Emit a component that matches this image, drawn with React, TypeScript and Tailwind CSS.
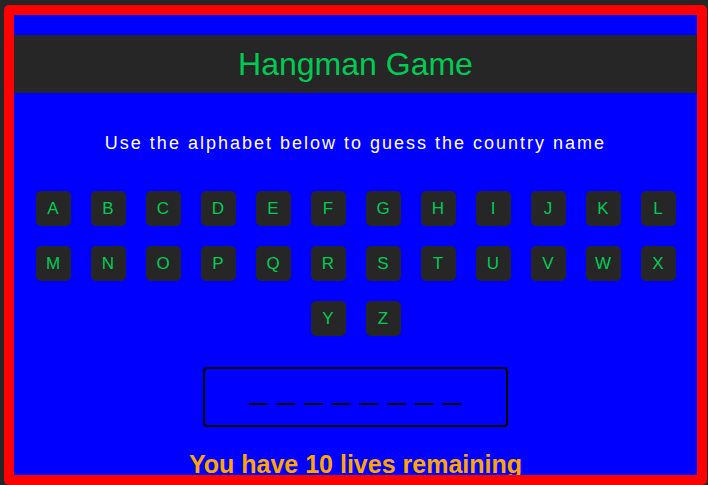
import React from "react";

const ROWS = ["ABCDEFGHIJKL", "MNOPQRSTUVWX", "YZ"];

export default function App() {
  const letters = ROWS.join("").split("");
  return (
    <div
      className="min-h-screen bg-[#262626] pt-[5px] pl-[4px] pr-[1px]"
      style={{ fontFamily: '"Liberation Sans", Arial, sans-serif' }}
    >
      <div className="h-[480px] border-[10px] border-[#ff0000] rounded-[5px] bg-[#0000ff] overflow-hidden flex flex-col items-center">
        <div className="mt-[20px] w-full h-[58px] shrink-0 bg-[#262626] flex items-center justify-center">
          <h1 className="text-[32px] text-[#00cc55] font-normal">Hangman Game</h1>
        </div>
        <p className="mt-[39.5px] text-white text-[18px] leading-[20px] tracking-[2px]">
          Use the alphabet below to guess the country name
        </p>
        <div className="mt-[38.5px] w-[640px] flex flex-wrap justify-center gap-x-[20px] gap-y-[20px]">
          {letters.map((l) => (
            <button
              key={l}
              className="w-[35px] h-[35px] rounded-[5px] bg-[#262626] text-[#00cc55] text-[17px] flex items-center justify-center"
            >
              {l}
            </button>
          ))}
        </div>
        <div className="mt-[30.5px] w-[305px] h-[60px] shrink-0 border-2 border-black rounded-[4px] flex justify-center pt-[3px]">
          <span className="text-[32px] leading-[32px] tracking-[0.5px] text-black">
            _ _ _ _ _ _ _ _
          </span>
        </div>
        <p className="mt-[23px] text-[25px] leading-[28px] font-bold text-[#ffa500] whitespace-nowrap">
          You have 10 lives remaining
        </p>
      </div>
    </div>
  );
}
